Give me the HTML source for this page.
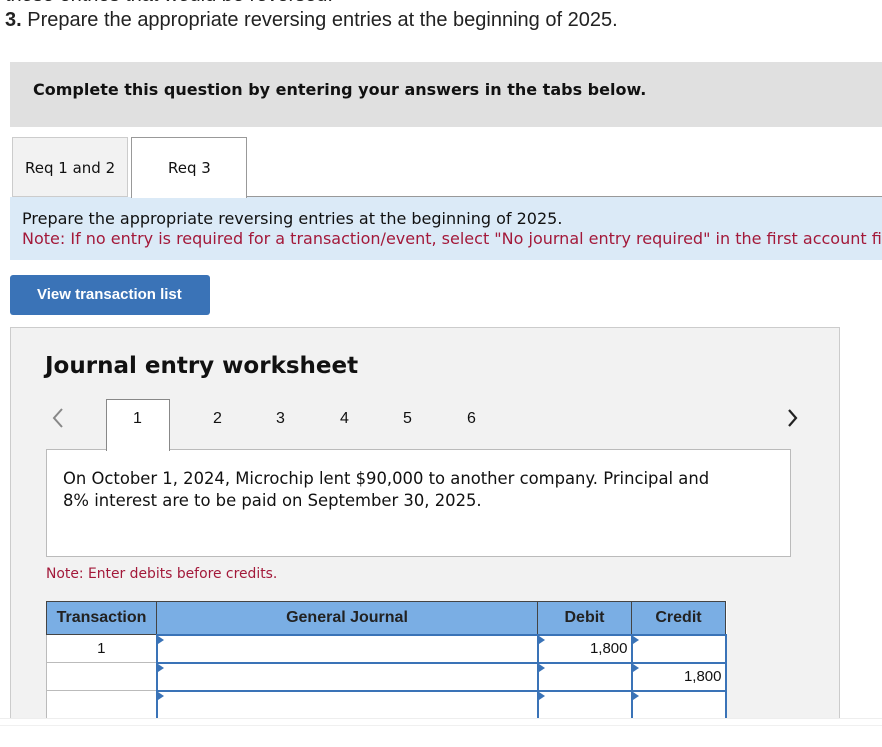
<!DOCTYPE html>
<html><head><meta charset="utf-8"><style>
*{margin:0;padding:0;box-sizing:border-box}
body{width:882px;height:747px;background:#fff;position:relative;overflow:hidden;font-family:"DejaVu Sans","Liberation Sans",sans-serif;color:#111}
.a{position:absolute;white-space:nowrap}
.ls{font-family:"Liberation Sans",sans-serif}
td{border:1px solid #444;position:relative}
.in{border:2px solid #3a73b7}
.in:before{content:"";position:absolute;left:0;top:0;border-left:6px solid #3a73b7;border-top:4px solid transparent;border-bottom:4px solid transparent}
</style></head><body>
<div class="a ls" style="left:5px;top:-16px;font-size:20px;color:#222">those entries that would be reversed.</div>
<div class="a ls" style="left:5px;top:9px;font-size:20px;color:#222"><b>3.</b> Prepare the appropriate reversing entries at the beginning of 2025.</div>

<div class="a" style="left:10px;top:62px;width:872px;height:65px;background:#e0e0e0"></div>
<div class="a" style="left:33px;top:80px;font-size:16px;font-weight:bold">Complete this question by entering your answers in the tabs below.</div>

<div class="a" style="left:12px;top:137px;width:116px;height:60px;background:#f2f2f2;border:1px solid #ccc"></div>
<div class="a" style="left:25px;top:159px;font-size:15px">Req 1 and 2</div>
<div class="a" style="left:131px;top:137px;width:116px;height:61px;background:#fff;border:1px solid #999;border-bottom:none;z-index:2"></div>
<div class="a" style="left:168px;top:159px;font-size:15px;z-index:3">Req 3</div>
<div class="a" style="left:246px;top:196px;width:636px;height:1px;background:#999"></div>

<div class="a" style="left:10px;top:197px;width:872px;height:63px;background:#dbeaf7"></div>
<div class="a" style="left:22px;top:209px;font-size:16px">Prepare the appropriate reversing entries at the beginning of 2025.</div>
<div class="a" style="left:22px;top:229px;font-size:16px;color:#a3193a">Note: If no entry is required for a transaction/event, select "No journal entry required" in the first account field.</div>

<div class="a" style="left:10px;top:275px;width:200px;height:40px;background:#3a73b7;border-radius:3px"></div>
<div class="a ls" style="left:37px;top:286px;font-size:15px;font-weight:bold;color:#fff">View transaction list</div>

<div class="a" style="left:10px;top:327px;width:830px;height:400px;background:#f2f2f2;border:1px solid #ccc"></div>
<div class="a" style="left:45px;top:353px;font-size:23px;font-weight:bold">Journal entry worksheet</div>

<svg class="a" style="left:50px;top:407px" width="16" height="22"><path d="M12 2 L4 11 L12 20" stroke="#888" stroke-width="2" fill="none"/></svg>
<svg class="a" style="left:785px;top:407px" width="16" height="22"><path d="M4 3 L11 11 L4 19" stroke="#222" stroke-width="2.2" fill="none"/></svg>
<div class="a" style="left:106px;top:399px;width:64px;height:52px;background:#fff;border:1px solid #888;border-bottom:none;z-index:2"></div>
<div class="a ls" style="left:133px;top:410px;font-size:16px;z-index:3">1</div>
<div class="a ls" style="left:213px;top:410px;font-size:16px">2</div>
<div class="a ls" style="left:276px;top:410px;font-size:16px">3</div>
<div class="a ls" style="left:340px;top:410px;font-size:16px">4</div>
<div class="a ls" style="left:403px;top:410px;font-size:16px">5</div>
<div class="a ls" style="left:467px;top:410px;font-size:16px">6</div>

<div class="a" style="left:46px;top:449px;width:745px;height:108px;background:#fff;border:1px solid #bbb"></div>
<div class="a" style="left:63px;top:468px;font-size:16.4px;line-height:22px">On October 1, 2024, Microchip lent $90,000 to another company. Principal and<br>8% interest are to be paid on September 30, 2025.</div>
<div class="a" style="left:46px;top:566px;font-size:13.9px;color:#a3193a">Note: Enter debits before credits.</div>

<table class="a ls" style="left:46px;top:601px;border-collapse:collapse;font-size:16px;background:#fff">
<tr style="height:33px;background:#7aaee4;font-weight:bold;color:#222">
<td style="width:110px;text-align:center">Transaction</td>
<td style="width:381px;text-align:center">General Journal</td>
<td style="width:94px;text-align:center">Debit</td>
<td style="width:94px;text-align:center">Credit</td></tr>
<tr style="height:28px"><td style="border-color:#bbb;text-align:center;font-size:15px">1</td><td class="in"></td><td class="in" style="text-align:right;padding-right:3px;font-size:15px">1,800</td><td class="in"></td></tr>
<tr style="height:28px"><td style="border-color:#bbb"></td><td class="in"></td><td class="in"></td><td class="in" style="text-align:right;padding-right:3px;font-size:15px">1,800</td></tr>
<tr style="height:28px"><td style="border-color:#bbb"></td><td class="in"></td><td class="in"></td><td class="in"></td></tr>
</table>
<div class="a" style="left:0;top:718px;width:882px;height:29px;background:#fff;border-top:1px solid #eee;z-index:5"></div>
<div class="a" style="left:0;top:725px;width:882px;height:1px;background:#f0f0f0;z-index:6"></div>
</body></html>
